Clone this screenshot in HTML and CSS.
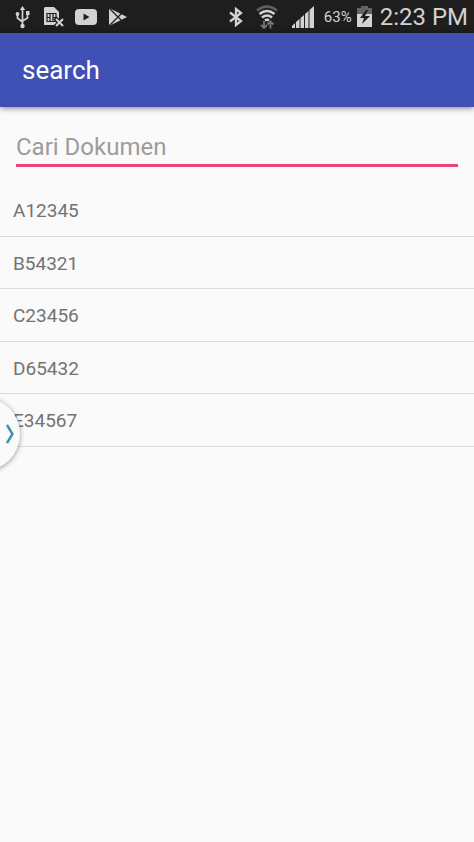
FILE: index.html
```html
<!DOCTYPE html>
<html lang="id">
<head>
<meta charset="utf-8">
<meta name="viewport" content="width=device-width, initial-scale=1">
<title>search</title>
<link rel="stylesheet" href="styles.css">
</head>
<body>
<div class="status-bar">
  <div class="status-group notices">
    <svg width="16" height="24" viewBox="0 0 16 24" aria-hidden="true"><g fill="none" stroke="#d2d2d2" stroke-width="1.7"><path d="M7.500 4v16M2.500 9v4l5 4M12.500 8v5l-5 3"/></g><g fill="#d2d2d2"><path d="M7.500 1l2.700 4H4.800z"/><circle cx="7.500" cy="21" r="2.200"/><circle cx="2.500" cy="9" r="1.900"/><path d="M11 6h3.500v4H11z"/></g></svg>
    <svg width="22" height="22" viewBox="0 0 22 22" aria-hidden="true"><path fill="#d2d2d2" d="M3 1h9l5 5v13H2V2z"/><path fill="none" stroke="#1e1e1e" stroke-width="1.200" d="M5 7.500h9v8H5zM5 11.500h3M11 11.500h3M8 7.500v8M11 7.500v8"/><path fill="none" stroke="#1e1e1e" stroke-width="4.500" d="M13 12l9 9m0-9l-9 9"/><path fill="none" stroke="#d2d2d2" stroke-width="2" d="M14 13l7 7m0-7l-7 7"/></svg>
    <svg width="22" height="16" viewBox="0 0 22 16" aria-hidden="true"><rect width="22" height="16" rx="4" fill="#d2d2d2"/><path d="M8.500 4.500v7l6-3.500z" fill="#1e1e1e"/></svg>
    <svg width="20" height="20" viewBox="0 0 20 20" aria-hidden="true"><path fill="#d2d2d2" d="M1 1l18 9L1 19z"/><path fill="none" stroke="#1e1e1e" stroke-width="1.300" d="M1 1l13 13M1 19L14 6"/></svg>
  </div>
  <div class="status-group system">
    <svg width="14" height="20" viewBox="0 0 14 20" aria-hidden="true"><path fill="none" stroke="#d2d2d2" stroke-width="2.300" d="M1 5.500l11 8.500-5 4V2l5 4-11 8.500"/></svg>
    <svg class="wifi" width="22" height="24" viewBox="0 0 22 24" aria-hidden="true"><g fill="none" stroke-width="2.600"><path stroke="#606060" d="M1 5.500q10-8 20 0"/><path stroke="#d2d2d2" d="M3.500 9q7.500-6 15 0M6 12.500q5-4 10 0"/><path stroke="#d2d2d2" d="M9 15.500q2-1.500 4 0"/><path stroke="#777" stroke-width="1.800" d="M8 16v7m-3-3l3 3 3-3M14.500 23.500v-7m-3 3l3-3 3 3"/></g></svg>
    <svg class="signal" width="22" height="22" viewBox="0 0 22 22" aria-hidden="true"><path fill="#d2d2d2" d="M0 22v-2l3-3v5zM4 22v-6l3.500-3v9zM8.500 22V12L12 9v13zM13 22V8l3.500-3v17zM17.500 22V4L22 0v22z"/></svg>
    <span class="battery-level">63%</span>
    <svg class="battery" width="15" height="21" viewBox="0 0 15 21" aria-hidden="true"><path fill="#646464" d="M4 0h7v2h4v7H0V2h4z"/><path fill="#d2d2d2" d="M0 8h15v13H0z"/><path fill="#1e1e1e" d="M9 4l-6 8h4l-2 6 8-8H8l3-6z"/></svg>
    <time class="clock">2:23 PM</time>
  </div>
</div>
<header class="app-bar"><h1>search</h1></header>
<main>
  <form class="search-form">
    <input class="search-input" type="text" aria-label="Cari Dokumen" placeholder="Cari Dokumen">
  </form>
  <ul class="documents">
    <li>A12345</li>
    <li>B54321</li>
    <li>C23456</li>
    <li>D65432</li>
    <li>E34567<button class="edge-handle" type="button" aria-label="Buka panel"><svg width="8" height="20" viewBox="0 0 8 20" aria-hidden="true"><path fill="none" stroke="#3d8fb3" stroke-width="2.400" d="M1 1l5.500 9L1 19"/></svg></button></li>
  </ul>
</main>
</body>
</html>
```
FILE: styles.css
```css
* {
  box-sizing: border-box;
}

body {
  margin: 0;
  min-height: 100vh;
  background: #fafafa;
  color: #737373;
  font-family: Roboto, "Liberation Sans", sans-serif;
}

svg {
  display: block;
  flex: none;
}

.status-bar {
  display: flex;
  align-items: center;
  justify-content: space-between;
  height: 33px;
  padding: 0 6px 0 15px;
  background: #1e1e1e;
  color: #d2d2d2;
}

.status-group {
  display: flex;
  align-items: center;
}

.notices {
  gap: 11px;
}

.wifi {
  margin-left: 13px;
}

.signal {
  margin-left: 14px;
}

.battery-level {
  margin-left: 10px;
  font-size: 15px;
}

.battery {
  margin-left: 5px;
}

.clock {
  margin-left: 8px;
  font-size: 24px;
  line-height: 32px;
}

.app-bar {
  display: flex;
  align-items: center;
  height: 74px;
  padding: 0 22px;
  background: #3f51b5;
  box-shadow: 0 1px 6px rgba(0, 0, 0, 0.5);
  color: #fff;
}

.app-bar h1 {
  margin: 0;
  font-size: 26px;
  font-weight: 400;
  line-height: 32px;
}

.search-form {
  padding: 24px 16px 17px;
}

.search-input {
  display: block;
  width: 100%;
  height: 36px;
  padding: 0 0 2px;
  border: 0;
  border-bottom: 3px solid #e9457c;
  outline: 0;
  background: transparent;
  color: #333;
  font: 24px/30px Roboto, "Liberation Sans", sans-serif;
}

.search-input::placeholder {
  color: #9c9c9c;
  opacity: 1;
}

.documents {
  display: grid;
  grid-auto-rows: 1fr;
  min-height: 263px;
  margin: 0;
  padding: 0;
  list-style: none;
}

.documents li {
  position: relative;
  padding: 15px 13px 12px;
  border-bottom: 1px solid #dcdcdc;
  font-size: 19px;
  line-height: 24px;
}

.edge-handle {
  position: absolute;
  z-index: 1;
  top: 3px;
  left: -54px;
  display: flex;
  align-items: center;
  justify-content: flex-end;
  width: 74px;
  height: 74px;
  padding: 0 6px 0 0;
  border: 0;
  border-radius: 50%;
  background: #fafafa;
  box-shadow: 0 1px 5px rgba(0, 0, 0, 0.4);
}
```
